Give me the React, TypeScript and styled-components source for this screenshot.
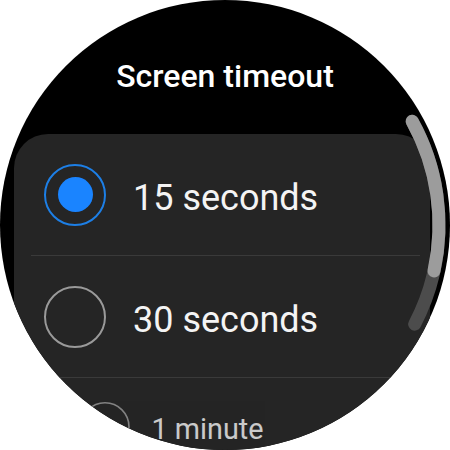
import styled, { createGlobalStyle } from "styled-components";

const GlobalStyle = createGlobalStyle`
  html, body {
    margin: 0;
    padding: 0;
    background: #ffffff;
  }
  body {
    font-family: Roboto, "Noto Sans", sans-serif;
  }
`;

const Watch = styled.div`
  position: relative;
  width: 450px;
  height: 450px;
  border-radius: 50%;
  background: #000000;
  overflow: hidden;
  display: flex;
  flex-direction: column;
`;

const Title = styled.h1`
  box-sizing: border-box;
  flex-shrink: 0;
  height: 134px;
  margin: 0;
  padding-top: 57px;
  text-align: center;
  font-size: 32px;
  line-height: 38px;
  font-weight: 500;
  color: #ffffff;
`;

const Card = styled.div`
  flex: 1;
  min-height: 0;
  margin: 0 20px 0 14px;
  background: #252525;
  border-radius: 34px 34px 0 0;
  display: flex;
  flex-direction: column;
`;

const Row = styled.div<{ $far?: boolean }>`
  display: flex;
  align-items: center;
  gap: 27px;
  height: 121px;
  padding-left: 30px;
  flex-shrink: 0;
  transform-origin: 211px 0;
  transform: ${(p) => (p.$far ? "scale(0.8)" : "none")};
  opacity: ${(p) => (p.$far ? 0.8 : 1)};
`;

const Radio = styled.span<{ $checked?: boolean }>`
  box-sizing: border-box;
  width: 62px;
  height: 62px;
  border-radius: 50%;
  border: 2px solid ${(p) => (p.$checked ? "#1d7fe6" : "#9a9a9a")};
  display: flex;
  align-items: center;
  justify-content: center;
  &::after {
    content: "";
    display: ${(p) => (p.$checked ? "block" : "none")};
    width: 35px;
    height: 35px;
    border-radius: 50%;
    background: #1a84ff;
  }
`;

const Label = styled.span`
  margin-top: 6px;
  font-size: 36px;
  color: #f4f4f4;
`;

const Divider = styled.div`
  height: 1px;
  margin: 0 10px 0 17px;
  background: #3a3a3a;
  flex-shrink: 0;
`;

const ScrollIndicator = styled.svg`
  position: absolute;
  inset: 0;
  pointer-events: none;
`;

const R = 214;
const C = 225;
const pt = (deg: number) => {
  const a = (deg * Math.PI) / 180;
  return `${C + R * Math.cos(a)} ${C + R * Math.sin(a)}`;
};
const arc = (from: number, to: number) =>
  `M ${pt(from)} A ${R} ${R} 0 0 1 ${pt(to)}`;

const options = [
  { label: "15 seconds", checked: true },
  { label: "30 seconds" },
  { label: "1 minute", far: true },
];

export default function App() {
  return (
    <>
      <GlobalStyle />
      <Watch>
        <Title>Screen timeout</Title>
        <Card>
          {options.map((o, i) => (
            <div key={o.label}>
              {i > 0 && <Divider />}
              <Row $far={o.far}>
                <Radio $checked={o.checked} />
                <Label>{o.label}</Label>
              </Row>
            </div>
          ))}
        </Card>
        <ScrollIndicator width="450" height="450" viewBox="0 0 450 450">
          <path
            d={arc(-29, 27.6)}
            stroke="#4c4c4c"
            strokeWidth="13"
            strokeLinecap="round"
            fill="none"
          />
          <path
            d={arc(-29, 12.4)}
            stroke="#9c9c9c"
            strokeWidth="13"
            strokeLinecap="round"
            fill="none"
          />
        </ScrollIndicator>
      </Watch>
    </>
  );
}
